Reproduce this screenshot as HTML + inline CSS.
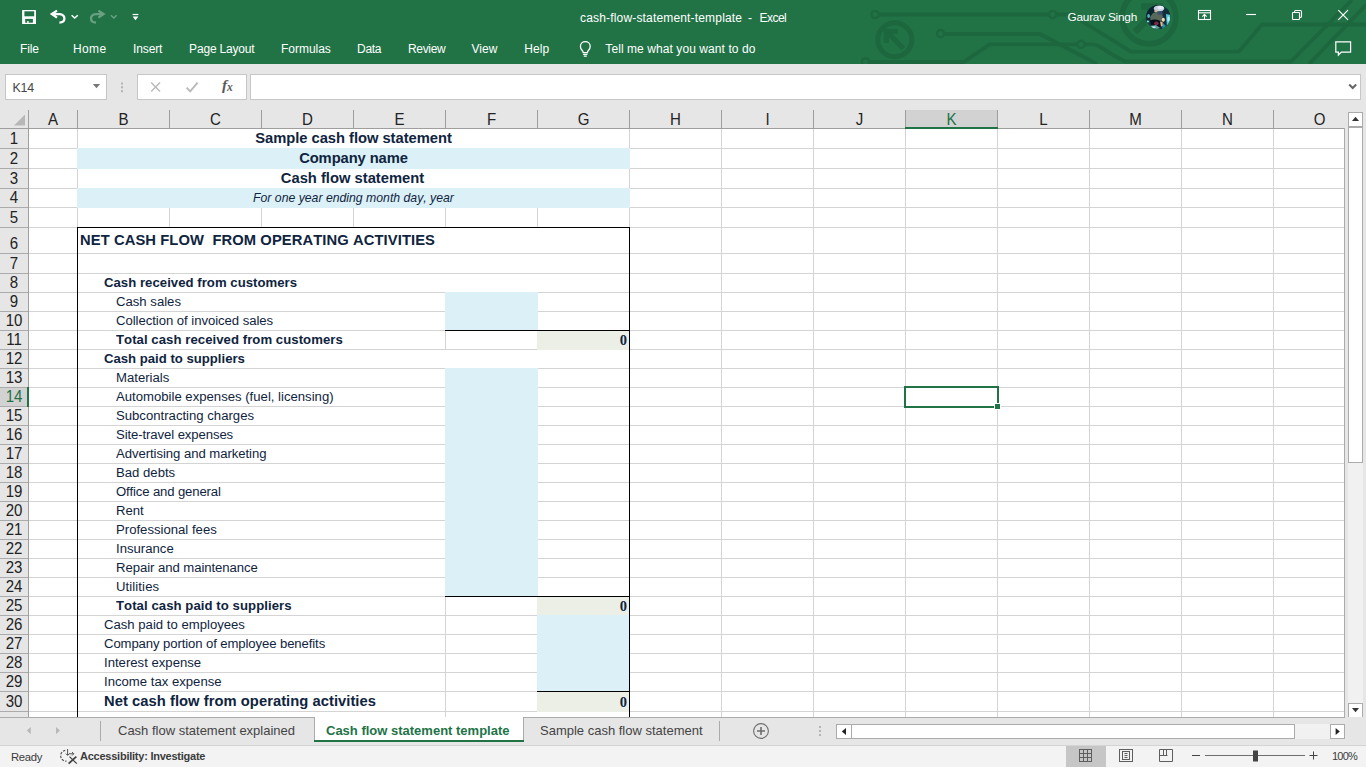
<!DOCTYPE html>
<html lang="en"><head><meta charset="utf-8"><title>cash-flow-statement-template - Excel</title>
<style>
html,body{margin:0;padding:0;}
body{width:1366px;height:768px;overflow:hidden;position:relative;background:#e6e6e6;font-family:"Liberation Sans",sans-serif;}
.abs,.abs *{position:absolute;}
#app{position:absolute;left:0;top:0;width:1366px;height:768px;overflow:hidden;}
#app div,#app span,#app svg{position:absolute;white-space:nowrap;}
.top{left:0;top:0;width:1366px;height:64px;background:#217346;}
.tab{color:#fff;font-size:12px;top:41px;line-height:16px;}
.title{color:#fff;font-size:12px;line-height:16px;}
.fb{background:#fff;border:1px solid #c6c6c6;box-sizing:border-box;}
.ch{top:110.7px;height:17px;line-height:18px;font-size:15.7px;text-align:center;color:#222;transform:scaleX(0.96);}
.rh{left:0;width:28px;font-size:15.9px;text-align:center;color:#222;transform:scaleX(0.945);}
.vl{width:1px;background:#d4d4d4;}
.hl{height:1px;background:#d4d4d4;}
.cell{font-size:13.33px;color:#0f243e;line-height:19px;font-kerning:none;}
.b{font-weight:bold;}
.fillb{background:#dbf0f7;}
.fillg{background:#ebefe6;}
.blk{background:#000;}
.zero{font-family:"Liberation Serif",serif;font-weight:bold;font-size:14.5px;color:#0f243e;text-align:right;line-height:19px;}
.st{font-size:12px;color:#3b3b3b;}
</style></head><body><div id="app">

<div class="top"></div>
<svg style="left:840px;top:0;" width="526" height="64" viewBox="840 0 526 64" fill="none" stroke="#1d673e" stroke-width="3.8" stroke-linejoin="round">
<circle cx="875" cy="14.5" r="3.6" stroke-width="2.4"/><path d="M879 14.5H1049"/><circle cx="1052.6" cy="14.5" r="3.6" stroke-width="2.4"/>
<path d="M1056 14.5H1071L1131 51.6H1239L1262 24.5H1366"/>
<circle cx="894.8" cy="39.8" r="17" stroke-width="5"/><path d="M903.5 48.5L888 33M886.3 43V31.3H898" stroke-width="5.2" stroke-linejoin="miter"/>
<circle cx="940.5" cy="33.6" r="3.6" stroke-width="2.4"/><path d="M944 33.8H1039.6L1097 64"/>
<circle cx="865.5" cy="62" r="3.6" stroke-width="2.4"/><path d="M869 62H963.7L989.6 44.4H1077"/><circle cx="1081" cy="44.4" r="3.6" stroke-width="2.4"/>
<path d="M1085 44.4H1092C1100 44.4 1104 50 1113 55L1125 61.5H1291L1352 0"/>
<path d="M1309 64L1366 5"/>
<circle cx="1149" cy="17" r="26.8" stroke-width="5.8"/><path d="M1141 6.5H1160V26M1159 7.5L1135 32" stroke-width="6.5" stroke-linejoin="miter"/>
</svg>
<svg style="left:0;top:0;" width="160" height="33" viewBox="0 0 160 33" fill="none" stroke="#fff">
<g stroke="none"><rect x="22.1" y="10" width="13.9" height="14" rx="0.6" fill="#fff"/><rect x="24.4" y="11.3" width="9.8" height="5" fill="#217346"/><rect x="25.2" y="18.9" width="7.7" height="3.8" fill="#217346"/><rect x="27" y="21.2" width="1.8" height="1.5" fill="#fff"/></g>
<path d="M57 10.6L51.8 14.1L57 17.6M52.6 14.1H59.5C63 14.4 64.4 16.4 64.4 18.5C64.4 20.9 62.6 22.5 59.4 22.6" stroke-width="2.3"/>
<path d="M71.6 15.2L74.7 18L77.8 15.2" stroke-width="1.5"/>
<g opacity="0.32"><path d="M98.4 10.6L103.6 14.1L98.4 17.6M102.8 14.1H95.9C92.4 14.4 91 16.4 91 18.5C91 20.9 92.8 22.5 96 22.6" stroke-width="2.3"/>
<path d="M110.9 15.2L113.8 18L116.7 15.2" stroke-width="1.5"/></g>
<path d="M132.6 14.5H138.4" stroke-width="1.2"/><path d="M132.6 16.6H138.4L135.5 20.2Z" fill="#fff" stroke="none"/>
</svg>
<span class="title" style="left:580px;top:10px;letter-spacing:0.17px;">cash-flow-statement-template</span>
<span class="title" style="left:748px;top:10px;">-</span>
<span class="title" style="left:759.6px;top:10px;letter-spacing:-0.55px;">Excel</span>
<span class="title" style="left:1067.5px;top:9px;font-size:11.8px;letter-spacing:-0.22px;">Gaurav Singh</span>
<svg style="left:1130px;top:0;" width="236" height="64" viewBox="1130 0 236 64" fill="none" stroke="#fff" stroke-width="1.1">
<defs><clipPath id="avc"><circle cx="1158.2" cy="17" r="12.1"/></clipPath></defs>
<g clip-path="url(#avc)" stroke="none">
<rect x="1146" y="4" width="25" height="26" fill="#134049"/>
<path d="M1146 4H1160L1150 20L1146 22Z" fill="#0b2530"/>
<path d="M1162 9L1171 8V30H1160Z" fill="#10303c"/>
<ellipse cx="1159" cy="8.6" rx="5.2" ry="3.2" fill="#c5cfe0"/>
<ellipse cx="1160.5" cy="7.5" rx="3" ry="1.8" fill="#e6eaf4"/>
<path d="M1153 13L1161 11L1163 17L1161 22L1151 21L1150 17Z" fill="#56695a"/>
<path d="M1157 11.5L1162 11L1163 15L1158 14.5Z" fill="#3a4d6a"/>
<ellipse cx="1155.8" cy="11" rx="1.6" ry="1.2" fill="#c9b49a"/>
<path d="M1150 20.5C1154 18.5 1160 19.5 1163 23L1160 27L1151 25Z" fill="#071017"/>
<ellipse cx="1156.4" cy="23.3" rx="2.2" ry="1.9" fill="#7c2a4c"/>
<ellipse cx="1163.3" cy="19.8" rx="1.6" ry="2" fill="#f2d3b4"/>
<path d="M1160 21.5L1162.5 22L1163 26L1161 26.5Z" fill="#e5b78c"/>
<path d="M1166 14L1170.5 15V25L1167 27L1166.5 21Z" fill="#5fc7d4"/>
<ellipse cx="1168.6" cy="19" rx="1.3" ry="2.6" fill="#aaf0f4"/>
<ellipse cx="1148.6" cy="16" rx="1.4" ry="2" fill="#4fb2bd"/>
<ellipse cx="1147.8" cy="21.6" rx="1.2" ry="1" fill="#8fe3ea"/>
<path d="M1150 26L1156 25L1160 28L1154 30Z" fill="#5f9c98"/>
<ellipse cx="1153.6" cy="27.3" rx="2.2" ry="1" fill="#b5e4e2"/>
<path d="M1163 23L1167 27L1162 29Z" fill="#2f8f9f"/>
</g>
<rect x="1198.5" y="10.5" width="12" height="9"/><path d="M1198.5 12.8H1210.5" /><path d="M1204.5 19V14.6M1202.3 16.6L1204.5 14.4L1206.7 16.6"/>
<path d="M1246 14.5H1256"/>
<rect x="1292.5" y="12.5" width="7" height="7" rx="0.6"/><path d="M1294.5 12.2V11.5Q1294.5 10.5 1295.5 10.5H1300.5Q1301.5 10.5 1301.5 11.5V16.5Q1301.5 17.5 1300 17.5"/>
<path d="M1338.3 10.2L1348 19.9M1348 10.2L1338.3 19.9" stroke-width="1.2"/>
<path d="M1335.8 41.9H1350.6V52.1H1341.4L1338.4 55V52.1H1335.8Z" stroke-width="1.2"/>
</svg>
<span class="tab" style="left:20.1px;letter-spacing:-0.18px;">File</span>
<span class="tab" style="left:72.9px;letter-spacing:0.40px;">Home</span>
<span class="tab" style="left:133.0px;letter-spacing:-0.12px;">Insert</span>
<span class="tab" style="left:189.1px;letter-spacing:-0.18px;">Page Layout</span>
<span class="tab" style="left:281.1px;letter-spacing:-0.05px;">Formulas</span>
<span class="tab" style="left:357.1px;letter-spacing:-0.36px;">Data</span>
<span class="tab" style="left:408.0px;letter-spacing:-0.34px;">Review</span>
<span class="tab" style="left:471.5px;letter-spacing:0.03px;">View</span>
<span class="tab" style="left:524.2px;letter-spacing:0.08px;">Help</span>
<span class="tab" style="left:605.3px;letter-spacing:0.08px;">Tell me what you want to do</span>
<svg style="left:575px;top:38px;" width="22" height="22" viewBox="575 38 22 22" fill="none" stroke="#fff" stroke-width="1.3">
<path d="M583.2 52.6C583.2 50.6 580.4 49.6 580.4 46.4C580.4 43.6 582.6 41.7 585.3 41.7C588 41.7 590.2 43.6 590.2 46.4C590.2 49.6 587.4 50.6 587.4 52.6Z"/><path d="M583.2 54.4H587.4M583.8 56.2H586.8"/></svg>
<div class="fb" style="left:5px;top:74px;width:102px;height:26px;"></div>
<span style="left:12.6px;top:80px;font-size:12.4px;line-height:16px;color:#444;letter-spacing:-0.3px;">K14</span>
<div class="fb" style="left:137px;top:74px;width:110px;height:26px;"></div>
<div class="fb" style="left:250px;top:74px;width:1111px;height:26px;"></div>
<svg style="left:0;top:64px;" width="1366" height="46" viewBox="0 64 1366 46" fill="none">
<path d="M92.8 84H100.2L96.5 88.2Z" fill="#777"/>
<rect x="121" y="82.5" width="2" height="2" fill="#b4b4b4"/><rect x="121" y="86.3" width="2" height="2" fill="#b4b4b4"/><rect x="121" y="90.2" width="2" height="2" fill="#b4b4b4"/>
<path d="M151.2 82.6L160 91.4M160 82.6L151.2 91.4" stroke="#b9b9b9" stroke-width="1.4"/>
<path d="M186.6 87.6L190.2 91.4L197.6 82.6" stroke="#b9b9b9" stroke-width="1.9"/>
<path d="M1349.2 84.5L1352.7 88L1356.2 84.5" stroke="#666" stroke-width="2"/>
</svg>
<span style="left:222px;top:76px;font-family:'Liberation Serif',serif;font-style:italic;font-weight:bold;font-size:15.5px;line-height:18px;color:#5a5a5a;letter-spacing:-0.3px;">f<span style="position:relative;top:1px;font-size:11.5px;">x</span></span>
<div style="left:0;top:110px;width:1344px;height:607px;background:#e6e6e6;"></div>
<div style="left:29px;top:129px;width:1315px;height:588px;background:#fff;"></div>
<span class="ch" style="left:29px;width:48px;color:#222;">A</span>
<span class="ch" style="left:78px;width:91px;color:#222;">B</span>
<span class="ch" style="left:170px;width:91px;color:#222;">C</span>
<span class="ch" style="left:262px;width:91px;color:#222;">D</span>
<span class="ch" style="left:354px;width:91px;color:#222;">E</span>
<span class="ch" style="left:446px;width:91px;color:#222;">F</span>
<span class="ch" style="left:538px;width:91px;color:#222;">G</span>
<span class="ch" style="left:630px;width:91px;color:#222;">H</span>
<span class="ch" style="left:722px;width:91px;color:#222;">I</span>
<span class="ch" style="left:814px;width:91px;color:#222;">J</span>
<div style="left:906px;top:110px;width:91px;height:18px;background:#d2d2d2;"></div>
<div style="left:905px;top:127px;width:93px;height:2px;background:#217346;"></div>
<span class="ch" style="left:906px;width:91px;color:#217346;">K</span>
<span class="ch" style="left:998px;width:91px;color:#222;">L</span>
<span class="ch" style="left:1090px;width:91px;color:#222;">M</span>
<span class="ch" style="left:1182px;width:91px;color:#222;">N</span>
<span class="ch" style="left:1274px;width:91px;color:#222;">O</span>
<div style="left:28px;top:110px;width:1px;height:607px;background:#9e9e9e;"></div>
<div style="left:77px;top:110px;width:1px;height:18px;background:#9e9e9e;"></div>
<div style="left:169px;top:110px;width:1px;height:18px;background:#9e9e9e;"></div>
<div style="left:261px;top:110px;width:1px;height:18px;background:#9e9e9e;"></div>
<div style="left:353px;top:110px;width:1px;height:18px;background:#9e9e9e;"></div>
<div style="left:445px;top:110px;width:1px;height:18px;background:#9e9e9e;"></div>
<div style="left:537px;top:110px;width:1px;height:18px;background:#9e9e9e;"></div>
<div style="left:629px;top:110px;width:1px;height:18px;background:#9e9e9e;"></div>
<div style="left:721px;top:110px;width:1px;height:18px;background:#9e9e9e;"></div>
<div style="left:813px;top:110px;width:1px;height:18px;background:#9e9e9e;"></div>
<div style="left:905px;top:110px;width:1px;height:18px;background:#9e9e9e;"></div>
<div style="left:997px;top:110px;width:1px;height:18px;background:#9e9e9e;"></div>
<div style="left:1089px;top:110px;width:1px;height:18px;background:#9e9e9e;"></div>
<div style="left:1181px;top:110px;width:1px;height:18px;background:#9e9e9e;"></div>
<div style="left:1273px;top:110px;width:1px;height:18px;background:#9e9e9e;"></div>
<div style="left:0;top:128px;width:1344px;height:1px;background:#9e9e9e;"></div>
<div style="left:905px;top:127px;width:93px;height:2px;background:#217346;"></div>
<span class="rh" style="top:130.4px;height:18px;line-height:18px;color:#222;">1</span>
<div style="left:0;top:148px;width:28px;height:1px;background:#ababab;"></div>
<span class="rh" style="top:150.4px;height:18px;line-height:18px;color:#222;">2</span>
<div style="left:0;top:168px;width:28px;height:1px;background:#ababab;"></div>
<span class="rh" style="top:170.4px;height:18px;line-height:18px;color:#222;">3</span>
<div style="left:0;top:188px;width:28px;height:1px;background:#ababab;"></div>
<span class="rh" style="top:189.4px;height:18px;line-height:18px;color:#222;">4</span>
<div style="left:0;top:207px;width:28px;height:1px;background:#ababab;"></div>
<span class="rh" style="top:209.4px;height:18px;line-height:18px;color:#222;">5</span>
<div style="left:0;top:227px;width:28px;height:1px;background:#ababab;"></div>
<span class="rh" style="top:235.4px;height:18px;line-height:18px;color:#222;">6</span>
<div style="left:0;top:253px;width:28px;height:1px;background:#ababab;"></div>
<span class="rh" style="top:255.4px;height:18px;line-height:18px;color:#222;">7</span>
<div style="left:0;top:273px;width:28px;height:1px;background:#ababab;"></div>
<span class="rh" style="top:274.4px;height:18px;line-height:18px;color:#222;">8</span>
<div style="left:0;top:292px;width:28px;height:1px;background:#ababab;"></div>
<span class="rh" style="top:293.4px;height:18px;line-height:18px;color:#222;">9</span>
<div style="left:0;top:311px;width:28px;height:1px;background:#ababab;"></div>
<span class="rh" style="top:312.4px;height:18px;line-height:18px;color:#222;">10</span>
<div style="left:0;top:330px;width:28px;height:1px;background:#ababab;"></div>
<span class="rh" style="top:331.4px;height:18px;line-height:18px;color:#222;">11</span>
<div style="left:0;top:349px;width:28px;height:1px;background:#ababab;"></div>
<span class="rh" style="top:350.4px;height:18px;line-height:18px;color:#222;">12</span>
<div style="left:0;top:368px;width:28px;height:1px;background:#ababab;"></div>
<span class="rh" style="top:369.4px;height:18px;line-height:18px;color:#222;">13</span>
<div style="left:0;top:387px;width:28px;height:1px;background:#ababab;"></div>
<div style="left:0;top:388px;width:27px;height:18px;background:#d2d2d2;"></div>
<span class="rh" style="top:388.4px;height:18px;line-height:18px;color:#217346;">14</span>
<div style="left:0;top:406px;width:28px;height:1px;background:#ababab;"></div>
<span class="rh" style="top:407.4px;height:18px;line-height:18px;color:#222;">15</span>
<div style="left:0;top:425px;width:28px;height:1px;background:#ababab;"></div>
<span class="rh" style="top:426.4px;height:18px;line-height:18px;color:#222;">16</span>
<div style="left:0;top:444px;width:28px;height:1px;background:#ababab;"></div>
<span class="rh" style="top:445.4px;height:18px;line-height:18px;color:#222;">17</span>
<div style="left:0;top:463px;width:28px;height:1px;background:#ababab;"></div>
<span class="rh" style="top:464.4px;height:18px;line-height:18px;color:#222;">18</span>
<div style="left:0;top:482px;width:28px;height:1px;background:#ababab;"></div>
<span class="rh" style="top:483.4px;height:18px;line-height:18px;color:#222;">19</span>
<div style="left:0;top:501px;width:28px;height:1px;background:#ababab;"></div>
<span class="rh" style="top:502.4px;height:18px;line-height:18px;color:#222;">20</span>
<div style="left:0;top:520px;width:28px;height:1px;background:#ababab;"></div>
<span class="rh" style="top:521.4px;height:18px;line-height:18px;color:#222;">21</span>
<div style="left:0;top:539px;width:28px;height:1px;background:#ababab;"></div>
<span class="rh" style="top:540.4px;height:18px;line-height:18px;color:#222;">22</span>
<div style="left:0;top:558px;width:28px;height:1px;background:#ababab;"></div>
<span class="rh" style="top:559.4px;height:18px;line-height:18px;color:#222;">23</span>
<div style="left:0;top:577px;width:28px;height:1px;background:#ababab;"></div>
<span class="rh" style="top:578.4px;height:18px;line-height:18px;color:#222;">24</span>
<div style="left:0;top:596px;width:28px;height:1px;background:#ababab;"></div>
<span class="rh" style="top:597.4px;height:18px;line-height:18px;color:#222;">25</span>
<div style="left:0;top:615px;width:28px;height:1px;background:#ababab;"></div>
<span class="rh" style="top:616.4px;height:18px;line-height:18px;color:#222;">26</span>
<div style="left:0;top:634px;width:28px;height:1px;background:#ababab;"></div>
<span class="rh" style="top:635.4px;height:18px;line-height:18px;color:#222;">27</span>
<div style="left:0;top:653px;width:28px;height:1px;background:#ababab;"></div>
<span class="rh" style="top:654.4px;height:18px;line-height:18px;color:#222;">28</span>
<div style="left:0;top:672px;width:28px;height:1px;background:#ababab;"></div>
<span class="rh" style="top:673.4px;height:18px;line-height:18px;color:#222;">29</span>
<div style="left:0;top:691px;width:28px;height:1px;background:#ababab;"></div>
<span class="rh" style="top:693.4px;height:18px;line-height:18px;color:#222;">30</span>
<div style="left:0;top:711px;width:28px;height:1px;background:#ababab;"></div>
<div style="left:27px;top:387px;width:2px;height:20px;background:#217346;"></div>
<div class="hl" style="left:29px;top:148px;width:1315px;"></div>
<div class="hl" style="left:29px;top:168px;width:1315px;"></div>
<div class="hl" style="left:29px;top:188px;width:1315px;"></div>
<div class="hl" style="left:29px;top:207px;width:1315px;"></div>
<div class="hl" style="left:29px;top:227px;width:1315px;"></div>
<div class="hl" style="left:29px;top:253px;width:1315px;"></div>
<div class="hl" style="left:29px;top:273px;width:1315px;"></div>
<div class="hl" style="left:29px;top:292px;width:1315px;"></div>
<div class="hl" style="left:29px;top:311px;width:1315px;"></div>
<div class="hl" style="left:29px;top:330px;width:1315px;"></div>
<div class="hl" style="left:29px;top:349px;width:1315px;"></div>
<div class="hl" style="left:29px;top:368px;width:1315px;"></div>
<div class="hl" style="left:29px;top:387px;width:1315px;"></div>
<div class="hl" style="left:29px;top:406px;width:1315px;"></div>
<div class="hl" style="left:29px;top:425px;width:1315px;"></div>
<div class="hl" style="left:29px;top:444px;width:1315px;"></div>
<div class="hl" style="left:29px;top:463px;width:1315px;"></div>
<div class="hl" style="left:29px;top:482px;width:1315px;"></div>
<div class="hl" style="left:29px;top:501px;width:1315px;"></div>
<div class="hl" style="left:29px;top:520px;width:1315px;"></div>
<div class="hl" style="left:29px;top:539px;width:1315px;"></div>
<div class="hl" style="left:29px;top:558px;width:1315px;"></div>
<div class="hl" style="left:29px;top:577px;width:1315px;"></div>
<div class="hl" style="left:29px;top:596px;width:1315px;"></div>
<div class="hl" style="left:29px;top:615px;width:1315px;"></div>
<div class="hl" style="left:29px;top:634px;width:1315px;"></div>
<div class="hl" style="left:29px;top:653px;width:1315px;"></div>
<div class="hl" style="left:29px;top:672px;width:1315px;"></div>
<div class="hl" style="left:29px;top:691px;width:1315px;"></div>
<div class="hl" style="left:29px;top:711px;width:1315px;"></div>
<div class="vl" style="left:77px;top:129px;height:588px;"></div>
<div class="vl" style="left:169px;top:129px;height:588px;"></div>
<div class="vl" style="left:261px;top:129px;height:588px;"></div>
<div class="vl" style="left:353px;top:129px;height:588px;"></div>
<div class="vl" style="left:445px;top:129px;height:588px;"></div>
<div class="vl" style="left:537px;top:129px;height:588px;"></div>
<div class="vl" style="left:629px;top:129px;height:588px;"></div>
<div class="vl" style="left:721px;top:129px;height:588px;"></div>
<div class="vl" style="left:813px;top:129px;height:588px;"></div>
<div class="vl" style="left:905px;top:129px;height:588px;"></div>
<div class="vl" style="left:997px;top:129px;height:588px;"></div>
<div class="vl" style="left:1089px;top:129px;height:588px;"></div>
<div class="vl" style="left:1181px;top:129px;height:588px;"></div>
<div class="vl" style="left:1273px;top:129px;height:588px;"></div>
<div style="left:169px;top:129px;width:1px;height:78px;background:#fff;"></div>
<div style="left:261px;top:129px;width:1px;height:78px;background:#fff;"></div>
<div style="left:353px;top:129px;width:1px;height:78px;background:#fff;"></div>
<div style="left:445px;top:129px;width:1px;height:78px;background:#fff;"></div>
<div style="left:537px;top:129px;width:1px;height:78px;background:#fff;"></div>
<div class="hl" style="left:78px;top:148px;width:551px;"></div>
<div class="hl" style="left:78px;top:188px;width:551px;"></div>
<div class="fillb" style="left:77px;top:148px;width:553px;height:21px;"></div>
<div class="fillb" style="left:77px;top:188px;width:553px;height:20px;"></div>
<div style="left:169px;top:228px;width:1px;height:489px;background:#fff;"></div>
<div style="left:261px;top:228px;width:1px;height:489px;background:#fff;"></div>
<div style="left:353px;top:228px;width:1px;height:489px;background:#fff;"></div>
<div style="left:445px;top:228px;width:1px;height:489px;background:#fff;"></div>
<div style="left:537px;top:228px;width:1px;height:489px;background:#fff;"></div>
<div class="hl" style="left:78px;top:253px;width:551px;"></div>
<div class="hl" style="left:78px;top:273px;width:551px;"></div>
<div class="hl" style="left:78px;top:292px;width:551px;"></div>
<div class="hl" style="left:78px;top:311px;width:551px;"></div>
<div class="hl" style="left:78px;top:330px;width:551px;"></div>
<div class="hl" style="left:78px;top:349px;width:551px;"></div>
<div class="hl" style="left:78px;top:368px;width:551px;"></div>
<div class="hl" style="left:78px;top:387px;width:551px;"></div>
<div class="hl" style="left:78px;top:406px;width:551px;"></div>
<div class="hl" style="left:78px;top:425px;width:551px;"></div>
<div class="hl" style="left:78px;top:444px;width:551px;"></div>
<div class="hl" style="left:78px;top:463px;width:551px;"></div>
<div class="hl" style="left:78px;top:482px;width:551px;"></div>
<div class="hl" style="left:78px;top:501px;width:551px;"></div>
<div class="hl" style="left:78px;top:520px;width:551px;"></div>
<div class="hl" style="left:78px;top:539px;width:551px;"></div>
<div class="hl" style="left:78px;top:558px;width:551px;"></div>
<div class="hl" style="left:78px;top:577px;width:551px;"></div>
<div class="hl" style="left:78px;top:596px;width:551px;"></div>
<div class="hl" style="left:78px;top:615px;width:551px;"></div>
<div class="hl" style="left:78px;top:634px;width:551px;"></div>
<div class="hl" style="left:78px;top:653px;width:551px;"></div>
<div class="hl" style="left:78px;top:672px;width:551px;"></div>
<div class="hl" style="left:78px;top:691px;width:551px;"></div>
<div class="hl" style="left:78px;top:711px;width:551px;"></div>
<div class="vl" style="left:445px;top:330px;height:19px;"></div>
<div class="vl" style="left:445px;top:596px;height:121px;"></div>
<div class="fillb" style="left:445px;top:292px;width:93px;height:38px;"></div>
<div class="fillb" style="left:445px;top:368px;width:93px;height:228px;"></div>
<div class="fillg" style="left:537px;top:331px;width:92px;height:19px;"></div>
<div class="fillg" style="left:537px;top:597px;width:92px;height:18px;"></div>
<div class="fillb" style="left:537px;top:615px;width:92px;height:76px;"></div>
<div class="fillg" style="left:537px;top:692px;width:92px;height:20px;"></div>
<div class="blk" style="left:77px;top:227px;width:553px;height:1px;"></div>
<div class="blk" style="left:77px;top:227px;width:1px;height:490px;"></div>
<div class="blk" style="left:629px;top:227px;width:1px;height:490px;"></div>
<div class="blk" style="left:445px;top:330px;width:185px;height:1px;"></div>
<div class="blk" style="left:445px;top:596px;width:185px;height:1px;"></div>
<div class="blk" style="left:537px;top:691px;width:93px;height:1px;"></div>
<span class="cell b" style="left:77px;width:553px;text-align:center;transform-origin:50% 50%;transform:scaleX(0.9643);letter-spacing:-0.04px;top:128px;height:20px;line-height:20px;font-size:15.3px;">Sample cash flow statement</span>
<span class="cell b" style="left:77px;width:553px;text-align:center;transform-origin:50% 50%;transform:scaleX(0.9643);letter-spacing:-0.1px;top:148px;height:20px;line-height:20px;font-size:15.3px;">Company name</span>
<span class="cell b" style="left:77px;width:553px;text-align:center;transform-origin:50% 50%;transform:scaleX(0.9643);top:168px;height:20px;line-height:20px;font-size:15.3px;margin-left:-1px;">Cash flow statement</span>
<span class="cell " style="left:77px;width:553px;text-align:center;transform-origin:50% 50%;top:189px;height:19px;line-height:19px;font-size:12.25px;"><i>For one year ending month day, year</i></span>
<span class="cell b" style="left:80px;transform-origin:0 50%;transform:scaleX(0.9643);letter-spacing:0.09px;top:227px;height:26px;line-height:26px;font-size:15.3px;">NET CASH FLOW &nbsp;FROM OPERATING ACTIVITIES</span>
<span class="cell b" style="left:103.5px;transform-origin:0 50%;transform:scaleX(0.9597);letter-spacing:0.04px;top:273px;height:19px;line-height:19px;font-size:13.7px;">Cash received from customers</span>
<span class="cell " style="left:115.6px;transform-origin:0 50%;transform:scaleX(0.9597);top:292px;height:19px;line-height:19px;font-size:13.7px;">Cash sales</span>
<span class="cell " style="left:115.6px;transform-origin:0 50%;transform:scaleX(0.9597);letter-spacing:-0.05px;top:311px;height:19px;line-height:19px;font-size:13.7px;">Collection of invoiced sales</span>
<span class="cell b" style="left:115.6px;transform-origin:0 50%;transform:scaleX(0.9597);letter-spacing:0.06px;top:330px;height:19px;line-height:19px;font-size:13.7px;">Total cash received from customers</span>
<span class="cell b" style="left:103.5px;transform-origin:0 50%;transform:scaleX(0.9597);top:349px;height:19px;line-height:19px;font-size:13.7px;">Cash paid to suppliers</span>
<span class="cell " style="left:115.6px;transform-origin:0 50%;transform:scaleX(0.9597);top:368px;height:19px;line-height:19px;font-size:13.7px;">Materials</span>
<span class="cell " style="left:115.6px;transform-origin:0 50%;transform:scaleX(0.9597);top:387px;height:19px;line-height:19px;font-size:13.7px;">Automobile expenses (fuel, licensing)</span>
<span class="cell " style="left:115.6px;transform-origin:0 50%;transform:scaleX(0.9597);top:406px;height:19px;line-height:19px;font-size:13.7px;">Subcontracting charges</span>
<span class="cell " style="left:115.6px;transform-origin:0 50%;transform:scaleX(0.9597);letter-spacing:-0.1px;top:425px;height:19px;line-height:19px;font-size:13.7px;">Site-travel expenses</span>
<span class="cell " style="left:115.6px;transform-origin:0 50%;transform:scaleX(0.9597);letter-spacing:-0.06px;top:444px;height:19px;line-height:19px;font-size:13.7px;">Advertising and marketing</span>
<span class="cell " style="left:115.6px;transform-origin:0 50%;transform:scaleX(0.9597);top:463px;height:19px;line-height:19px;font-size:13.7px;">Bad debts</span>
<span class="cell " style="left:115.6px;transform-origin:0 50%;transform:scaleX(0.9597);letter-spacing:-0.15px;top:482px;height:19px;line-height:19px;font-size:13.7px;">Office and general</span>
<span class="cell " style="left:115.6px;transform-origin:0 50%;transform:scaleX(0.9597);top:501px;height:19px;line-height:19px;font-size:13.7px;">Rent</span>
<span class="cell " style="left:115.6px;transform-origin:0 50%;transform:scaleX(0.9597);top:520px;height:19px;line-height:19px;font-size:13.7px;">Professional fees</span>
<span class="cell " style="left:115.6px;transform-origin:0 50%;transform:scaleX(0.9597);top:539px;height:19px;line-height:19px;font-size:13.7px;">Insurance</span>
<span class="cell " style="left:115.6px;transform-origin:0 50%;transform:scaleX(0.9597);letter-spacing:-0.06px;top:558px;height:19px;line-height:19px;font-size:13.7px;">Repair and maintenance</span>
<span class="cell " style="left:115.6px;transform-origin:0 50%;transform:scaleX(0.9597);letter-spacing:0.1px;top:577px;height:19px;line-height:19px;font-size:13.7px;">Utilities</span>
<span class="cell b" style="left:115.6px;transform-origin:0 50%;transform:scaleX(0.9597);letter-spacing:0.07px;top:596px;height:19px;line-height:19px;font-size:13.7px;">Total cash paid to suppliers</span>
<span class="cell " style="left:103.5px;transform-origin:0 50%;transform:scaleX(0.9597);top:615px;height:19px;line-height:19px;font-size:13.7px;">Cash paid to employees</span>
<span class="cell " style="left:103.5px;transform-origin:0 50%;transform:scaleX(0.9597);letter-spacing:-0.11px;top:634px;height:19px;line-height:19px;font-size:13.7px;">Company portion of employee benefits</span>
<span class="cell " style="left:103.5px;transform-origin:0 50%;transform:scaleX(0.9597);top:653px;height:19px;line-height:19px;font-size:13.7px;">Interest expense</span>
<span class="cell " style="left:103.5px;transform-origin:0 50%;transform:scaleX(0.9597);top:672px;height:19px;line-height:19px;font-size:13.7px;">Income tax expense</span>
<span class="cell b" style="left:103.5px;transform-origin:0 50%;transform:scaleX(0.9643);letter-spacing:0.04px;top:691px;height:20px;line-height:20px;font-size:15.3px;">Net cash flow from operating activities</span>
<span class="zero" style="left:537px;width:90px;top:331px;height:19px;line-height:19px;">0</span>
<span class="zero" style="left:537px;width:90px;top:597px;height:19px;line-height:19px;">0</span>
<span class="zero" style="left:537px;width:90px;top:692px;height:20px;line-height:20px;">0</span>
<div style="left:904px;top:386px;width:91px;height:18px;border:2px solid #217346;"></div>
<div style="left:994px;top:403px;width:5px;height:5px;background:#217346;border:1px solid #fff;box-sizing:content-box;"></div>
<svg style="left:0;top:110px;" width="28" height="18" viewBox="0 0 28 18"><path d="M25 4.5V15.5H14Z" fill="#b7b7b7"/></svg>
<div style="left:1344px;top:128px;width:1px;height:589px;background:#ababab;"></div>
<div style="left:1345px;top:110px;width:21px;height:608px;background:#e6e6e6;"></div>
<div style="left:1348px;top:112px;width:15px;height:605px;background:#f1f1f1;"></div>
<div style="left:1348px;top:112px;width:15px;height:15px;background:#fff;border:1px solid #ababab;box-sizing:border-box;"></div>
<div style="left:1348px;top:127px;width:15px;height:336px;background:#fff;border:1px solid #ababab;box-sizing:border-box;"></div>
<div style="left:1348px;top:703px;width:15px;height:15px;background:#fff;border:1px solid #ababab;box-sizing:border-box;"></div>
<svg style="left:1348px;top:112px;" width="15" height="606" viewBox="1348 112 15 606"><path d="M1352 121H1359L1355.5 116.8Z" fill="#333"/><path d="M1352 708H1359L1355.5 712.2Z" fill="#333"/></svg>
<div style="left:0;top:717px;width:1366px;height:28px;background:#e6e6e6;"></div>
<div style="left:0;top:717px;width:1345px;height:1px;background:#ababab;"></div>
<div style="left:0;top:745px;width:1366px;height:23px;background:#f3f3f3;"></div>
<div style="left:0;top:745px;width:1366px;height:1px;background:#d4d4d4;"></div>
<div style="left:0;top:767px;width:1366px;height:1px;background:#fff;"></div>
<svg style="left:0;top:717px;" width="1366" height="28" viewBox="0 717 1366 28" fill="none"><path d="M30.8 727V734.2L26.8 730.6Z" fill="#b9b9b9"/><path d="M56 727V734.2L60 730.6Z" fill="#b9b9b9"/><path d="M100.5 721V741M719.5 721V741" stroke="#ababab"/><circle cx="761" cy="731" r="7.4" stroke="#6e6e6e" stroke-width="1.1"/><path d="M757 731H765M761 727V735" stroke="#6e6e6e" stroke-width="1.6"/><rect x="819" y="726" width="2" height="2" fill="#b4b4b4"/><rect x="819" y="730" width="2" height="2" fill="#b4b4b4"/><rect x="819" y="734" width="2" height="2" fill="#b4b4b4"/></svg>
<div style="left:314px;top:717px;width:210px;height:25px;background:#fff;border-left:1px solid #ababab;border-right:1px solid #ababab;box-sizing:border-box;"></div>
<div style="left:314px;top:740px;width:210px;height:2px;background:#217346;"></div>
<span style="left:118px;top:722px;font-size:13px;line-height:18px;color:#444;">Cash flow statement explained</span>
<span style="left:326px;top:722px;font-size:13px;line-height:18px;color:#217346;font-weight:bold;">Cash flow statement template</span>
<span style="left:540px;top:722px;font-size:13px;line-height:18px;color:#444;">Sample cash flow statement</span>
<div style="left:836px;top:724px;width:509px;height:15px;background:#f1f1f1;"></div>
<div style="left:836px;top:724px;width:16px;height:15px;background:#fff;border:1px solid #ababab;box-sizing:border-box;"></div>
<div style="left:851px;top:724px;width:444px;height:15px;background:#fff;border:1px solid #ababab;box-sizing:border-box;"></div>
<div style="left:1330px;top:724px;width:15px;height:15px;background:#fff;border:1px solid #ababab;box-sizing:border-box;"></div>
<svg style="left:836px;top:724px;" width="510" height="15" viewBox="836 724 510 15"><path d="M846 728V735L841.8 731.5Z" fill="#222"/><path d="M1335.6 728V735L1339.8 731.5Z" fill="#222"/></svg>
<span class="st" style="left:11px;top:749px;font-size:11.3px;line-height:16px;letter-spacing:-0.3px;">Ready</span>
<span class="st" style="left:80px;top:748px;font-size:11px;line-height:16px;font-weight:bold;letter-spacing:-0.24px;">Accessibility: Investigate</span>
<svg style="left:58px;top:746px;" width="22" height="20" viewBox="58 746 22 20" fill="none" stroke="#555" stroke-width="1.1">
<path d="M65.2 750.3A5.5 5.5 0 0 0 66.5 761.2" stroke-dasharray="2.4 1.3" stroke-width="1.2"/><path d="M67.6 749V755.2M65.8 753.6L67.6 755.4L69.4 753.6" stroke-width="1"/><path d="M69 753.8H73.6M72 752L73.8 753.8L72 755.6" stroke-width="1"/><path d="M76.3 756.6L68.6 763.6" stroke="#444" stroke-width="1.9"/><path d="M69.5 756.6L76.8 763.6" stroke="#444" stroke-width="1.3"/></svg>
<div style="left:1066px;top:746px;width:40px;height:21px;background:#c6c6c6;"></div>
<svg style="left:1060px;top:745px;" width="306" height="23" viewBox="1060 745 306 23" fill="none" stroke="#5e5e5e" stroke-width="1">
<rect x="1079.5" y="749.5" width="12" height="12"/><path d="M1083.5 749.5V761.5M1087.5 749.5V761.5M1079.5 753.5H1091.5M1079.5 757.5H1091.5"/>
<rect x="1119.5" y="749.5" width="13" height="12"/><rect x="1122.5" y="751.5" width="7" height="8"/><path d="M1124.5 753.5H1127.5M1124.5 755.5H1127.5M1124.5 757.5H1127.5"/>
<path d="M1159.5 749.5H1172.5V761.5H1159.5Z M1163.5 749.5V755.5M1166.5 749.5V755.5M1159.5 755.5H1167.5"/>
<path d="M1192 755.5H1200" stroke="#444"/><path d="M1205 755.5H1305" stroke="#6e6e6e"/><rect x="1253" y="750.5" width="5" height="11" fill="#444" stroke="none"/>
<path d="M1309.5 755.5H1317.5M1313.5 751.5V759.5" stroke="#444"/>
</svg>
<span class="st" style="left:1332px;top:748px;font-size:11px;line-height:16px;letter-spacing:-0.75px;">100%</span>
</div></body></html>
